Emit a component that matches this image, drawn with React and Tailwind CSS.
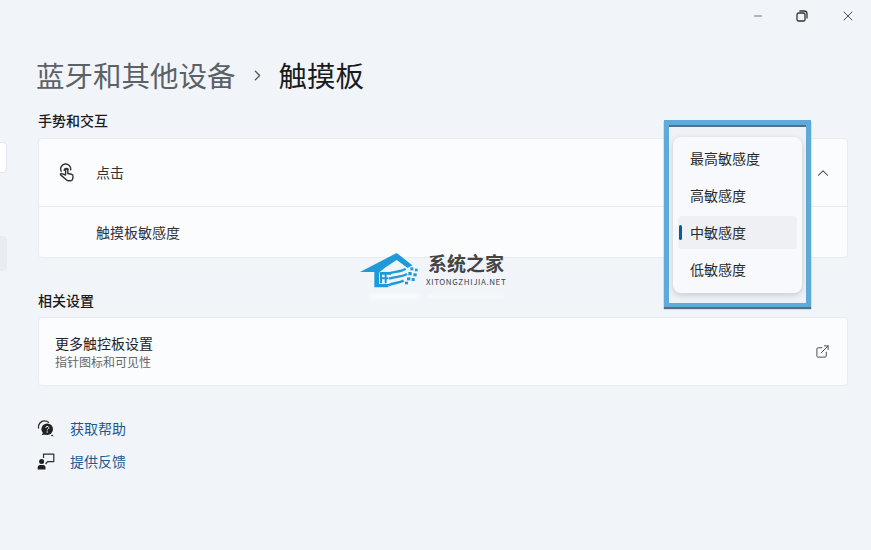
import React from "react";
import { ChevronUp, ChevronRight, ExternalLink, X, Minus } from "lucide-react";

const font = { fontFamily: '"Noto Sans CJK SC", "Noto Sans", sans-serif' };

function HandIcon() {
  return (
    <svg width="20" height="20" viewBox="0 0 20 20" fill="none" stroke="#333" strokeWidth="1.4" strokeLinecap="round" strokeLinejoin="round">
      <path d="M4.200 8.200a5 5 0 1 1 9.400-1.400" />
      <path d="M7.200 7.400a2.200 2.200 0 0 1 4-1" />
      <path d="M8.600 11V6.900a1.100 1.100 0 0 1 2.200 0v3.600l3.600.8c1 .2 1.700 1.100 1.600 2.100l-.3 2.400c-.1 1-1 1.900-2.100 1.900h-2.300c-.8 0-1.500-.3-2-.9L3.600 11.900c-.5-.6.1-1.600 1-1.300L8.600 12" />
    </svg>
  );
}

function HelpIcon() {
  return (
    <svg width="18" height="18" viewBox="0 0 18 18">
      <path d="M1.500 9A6.200 6.200 0 0 1 7.600 1.800c1.600 0 3 .6 4 1.600" fill="none" stroke="#2b2b2b" strokeWidth="1.300" strokeLinecap="round" />
      <circle cx="10.200" cy="10.200" r="5.800" fill="#222" />
      <path d="M4.600 16l2-3 2.400 2.400z" fill="#222" />
      <path d="M15 15.500l1.800 1.800-3-.4z" fill="#222" />
      <path d="M8.800 8.900a1.500 1.500 0 1 1 2.200 1.300c-.5.3-.8.6-.8 1.100" fill="none" stroke="#fff" strokeWidth="1" />
      <circle cx="10.200" cy="13" r=".7" fill="#fff" />
    </svg>
  );
}

function FeedbackIcon() {
  return (
    <svg width="18" height="18" viewBox="0 0 18 18">
      <path d="M6.500 6V2.200h10.300v7.400H10.600L8.600 12" fill="none" stroke="#2b2b2b" strokeWidth="1.200" strokeLinejoin="round" />
      <circle cx="4.600" cy="9.400" r="2.500" fill="#1f1f1f" />
      <path d="M.7 17.600v-2.200c0-1.400 1-2.400 2.400-2.400h3c1.400 0 2.400 1 2.400 2.400v2.200z" fill="#1f1f1f" />
    </svg>
  );
}

function RestoreIcon() {
  return (
    <svg width="12" height="12" viewBox="0 0 12 12" fill="none" stroke="#333" strokeWidth="1.300">
      <rect x="1" y="3" width="8" height="8" rx="1.600" />
      <path d="M3.400 1h4.800C9.900 1 11 2.100 11 3.800v4.800" />
    </svg>
  );
}

function Logo() {
  return (
    <svg width="70" height="50" viewBox="0 0 210 150">
      <path d="M15 72 L125 15 L172 52 L158 60 L125 36 L92 58 L74 72 Z" fill="#1e9ad9" />
      <path d="M58 72 H72 V108 H100 V118 H58 Z" fill="#1e9ad9" />
      <path d="M74 72 H108 V80 H74 Z M74 88 H100 V94 H74 Z" fill="#1e9ad9" />
      <path d="M78 72 V106 M92 78 V106" stroke="#1e9ad9" strokeWidth="6" fill="none" />
      <path d="M102 76 C118 70 136 72 152 62 M102 92 C118 86 138 88 156 78 M100 112 C116 104 130 106 146 98" stroke="#1e9ad9" strokeWidth="7" fill="none" />
      <g fill="#1e9ad9">
        <rect x="166" y="58" width="9" height="9" />
        <rect x="180" y="62" width="8" height="8" />
        <rect x="160" y="72" width="10" height="10" />
        <rect x="175" y="76" width="10" height="9" />
        <rect x="156" y="88" width="10" height="9" />
        <rect x="170" y="90" width="9" height="9" />
        <rect x="150" y="101" width="9" height="8" />
      </g>
    </svg>
  );
}

function Item({ label, selected }) {
  return (
    <div className={`relative h-[33px] rounded-[4px] flex items-center pl-[12px] text-[14px] text-[#2a2a2a] ${selected ? "bg-[#eef0f3]" : ""}`}>
      {selected && <span className="absolute left-[1px] top-[9px] h-[15px] w-[3px] rounded-full bg-[#0a5a9e]" />}
      {label}
    </div>
  );
}

export default function App() {
  return (
    <div style={font} className="relative h-[550px] w-[871px] overflow-hidden bg-[#f1f5fa] text-[#1b1b1b]">
      <div className="flex h-[32px] items-center justify-end pr-[1px]">
        <div className="flex h-[32px] w-[45px] items-center justify-center text-[#333]"><Minus size={12} strokeWidth={1.300} /></div>
        <div className="flex h-[32px] w-[45px] items-center justify-center pr-[1px]"><RestoreIcon /></div>
        <div className="flex h-[32px] w-[45px] items-center justify-center text-[#333]"><X size={16} strokeWidth={1.300} /></div>
      </div>

      <div className="absolute left-0 top-[142px] h-[31px] w-[7px] rounded-r-[4px] border border-l-0 border-[#e3e6ea] bg-white" />
      <div className="absolute left-0 top-[236px] h-[35px] w-[7px] rounded-r-[4px] bg-[#e9ecf0]" />

      <div className="pl-[37px] pr-[23px]">
        <div className="-ml-px mt-[19px] flex h-[48px] items-center text-[28.500px] leading-none">
          <span className="text-[#5b6166]">蓝牙和其他设备</span>
          <ChevronRight size={17} strokeWidth={1.800} className="ml-[13px] mr-[13px] text-[#555]" />
          <span className="text-[#1b1b1b]">触摸板</span>
        </div>

        <div className="mt-[11px] h-[20px] pl-px text-[14px] font-medium leading-[20px]">手势和交互</div>

        <div className="ml-px mt-[8px] rounded-[4px] border border-[#e8ebef] bg-[#fbfcfe]">
          <div className="flex h-[68px] items-center border-b border-[#e8ebef]">
            <div className="ml-[18px] flex w-[39px] items-center"><HandIcon /></div>
            <span className="text-[14px] text-[#333]">点击</span>
            <ChevronUp size={18} strokeWidth={1.400} className="ml-auto mr-[15px] text-[#333]" />
          </div>
          <div className="flex h-[50px] items-center pl-[57px] text-[14px] text-[#333]">触摸板敏感度</div>
        </div>

        <div className="mt-[32px] h-[20px] pl-px text-[14px] font-medium leading-[20px]">相关设置</div>

        <div className="ml-px mt-[7px] flex h-[69px] items-center rounded-[4px] border border-[#e8ebef] bg-[#fbfcfe] pl-[16px]">
          <div>
            <div className="text-[14px] leading-[19px] text-[#222]">更多触控板设置</div>
            <div className="text-[12px] leading-[17px] text-[#666]">指针图标和可见性</div>
          </div>
          <ExternalLink size={15} strokeWidth={1.500} className="ml-auto mr-[17px] text-[#444]" />
        </div>

        <div className="mt-[32px] flex h-[20px] items-center">
          <HelpIcon />
          <span className="ml-[15px] text-[14px] text-[#1d5a92]">获取帮助</span>
        </div>
        <div className="mt-[13px] flex h-[20px] items-center">
          <FeedbackIcon />
          <span className="ml-[15px] text-[14px] text-[#1d5a92]">提供反馈</span>
        </div>
      </div>

      <div className="absolute left-[664px] top-[120px] h-[187px] w-[147px] border-[5px] border-b-[4px] border-[#5daadb] bg-[#eef1f5] shadow-[0_2px_1px_#5b6b78,inset_0_2px_0_#557086]">
        <div className="absolute left-[4px] top-[12px] h-[156px] w-[129px] rounded-[8px] bg-[#f7f9fc] p-[5px] shadow-[0_2px_6px_rgba(0,0,0,0.16)]">
          <Item label="最高敏感度" />
          <div className="mt-[4px]"><Item label="高敏感度" /></div>
          <div className="mt-[4px]"><Item label="中敏感度" selected /></div>
          <div className="mt-[4px]"><Item label="低敏感度" /></div>
        </div>
      </div>

      <div className="absolute left-[355px] top-[248px]"><Logo /></div>
      <div className="absolute left-[428px] top-[250px] text-[19px] font-bold leading-[26px] text-[#444]">系统之家</div>
      <div className="absolute left-[426px] top-[276px] whitespace-nowrap text-[8px] leading-[12px] tracking-[0.6px] text-[#444]">XITONGZHIJIA.NET</div>
      <div className="absolute left-[370px] top-[294px] h-[5px] w-[50px] bg-white opacity-70 blur-[2px]" />
      <div className="absolute left-[428px] top-[295px] h-[3px] w-[76px] bg-white opacity-50 blur-[1px]" />
    </div>
  );
}
